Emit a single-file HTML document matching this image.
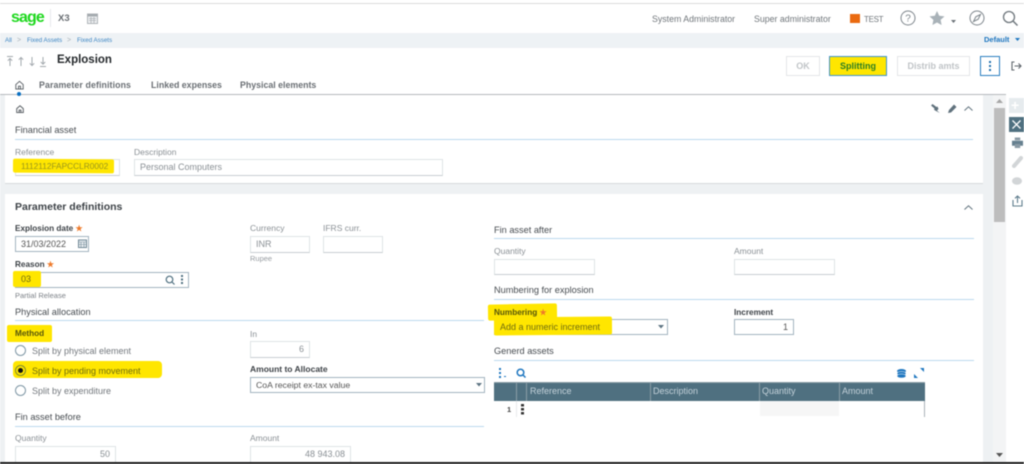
<!DOCTYPE html>
<html><head><meta charset="utf-8">
<style>
html,body{margin:0;padding:0;width:1024px;height:464px;overflow:hidden;background:#fff}
body{font-family:"Liberation Sans",sans-serif;color:#4a4f54;position:relative}
#w{position:absolute;left:0;top:0;width:1024px;height:464px;overflow:hidden;filter:blur(.4px)}
.a,.t,.i,.hl,svg{position:absolute}
.t{white-space:nowrap;font-size:9px;line-height:11px}
.i{box-sizing:border-box;background:#fff;border:1px solid #dfe3e6;border-bottom:1.5px solid #c8ced2;font-size:9px;color:#8a9095;line-height:15px;padding:0 5px;white-space:nowrap}
.e{border:1px solid #a3b4bf;color:#555}
.lab{color:#8b9196;font-size:8.5px}
.b{color:#3d4247;font-weight:bold;font-size:8.2px}
.sec{color:#474c51;font-size:9.2px}
.ln{position:absolute;height:1px;background:#bcd9ee}
.hl{background:#ffe600;border-radius:2px}
.r{text-align:right}
.th{color:#c3d1d9;font-size:9px;top:386px}
.tab{color:#6a6f74;font-weight:bold;font-size:8.8px;top:80px}
.btn{position:absolute;box-sizing:border-box;border:1px solid #e4e6e8;height:20px;top:56px;text-align:center;font-size:9px;font-weight:bold;color:#c0c4c7;line-height:18px;background:#fff}
</style></head><body><div id="w">
<div class="a" style="left:0;top:0;width:1024px;height:4px;background:#fff;border-bottom:1px solid #dcdcdc;box-sizing:border-box"></div>
<div class="t" style="left:11px;top:7px;font-size:16px;line-height:22px;font-weight:bold;color:#1ed81e;letter-spacing:-.9px">sage</div>
<div class="a" style="left:50px;top:9px;width:1px;height:18px;background:#e8eaec"></div>
<div class="t" style="left:58px;top:13px;font-size:9.5px;font-weight:bold;color:#686d72">X3</div>
<svg style="left:87px;top:13px" width="11" height="11" viewBox="0 0 11 11"><rect x=".5" y="1" width="10" height="9.5" fill="#eef0f2" stroke="#b0b5b9"/><rect x=".5" y="1" width="10" height="2.5" fill="#a5abaf"/><path d="M2 5.5h7M2 7.5h7M4 4v6M7 4v6" stroke="#b0b5b9" stroke-width=".8"/></svg>
<div class="t" style="left:652px;top:14px;color:#70767b;font-size:8.8px">System Administrator</div>
<div class="t" style="left:754px;top:14px;color:#70767b;font-size:8.8px">Super administrator</div>
<div class="a" style="left:850px;top:14px;width:10px;height:9px;background:#ea6a10"></div>
<div class="t" style="left:864px;top:14px;color:#70767b;font-size:8px;letter-spacing:-.3px">TEST</div>
<svg style="left:900px;top:10px" width="16" height="16" viewBox="0 0 16 16"><circle cx="8" cy="8" r="7" fill="none" stroke="#7e868c" stroke-width="1"/><text x="8" y="11.5" font-size="10" text-anchor="middle" fill="#7e868c" font-family="Liberation Sans">?</text></svg>
<svg style="left:929px;top:10px" width="30" height="17" viewBox="0 0 30 17"><path d="M8 1l2.2 4.8 5.3.6-3.9 3.5 1 5.1L8 12.5 3.400 15l1-5.100L.5 6.400l5.300-.6z" fill="#a9b2b8"/><path d="M22 10h5l-2.500 3z" fill="#6b7278"/></svg>
<svg style="left:969px;top:10px" width="16" height="16" viewBox="0 0 16 16"><circle cx="8" cy="8" r="7" fill="none" stroke="#7e868c"/><path d="M11.500 4.500L9.200 9.200 4.500 11.500 6.800 6.800z" fill="none" stroke="#7e868c"/></svg>
<svg style="left:1002px;top:10px" width="17" height="17" viewBox="0 0 17 17"><circle cx="7" cy="7" r="5.500" fill="none" stroke="#70787e" stroke-width="1.300"/><path d="M11 11l4.500 4.500" stroke="#70787e" stroke-width="1.500"/></svg>

<div class="a" style="left:0;top:33px;width:1024px;height:15px;background:#eef2f5"></div>
<div class="t" style="left:5px;top:36px;font-size:6.200px;line-height:9px;color:#3f87c4">All</div>
<div class="t" style="left:17px;top:36px;font-size:7px;line-height:9px;color:#aab2b8">&gt;</div>
<div class="t" style="left:27px;top:36px;font-size:6.200px;line-height:9px;color:#3f87c4">Fixed Assets</div>
<div class="t" style="left:67px;top:36px;font-size:7px;line-height:9px;color:#aab2b8">&gt;</div>
<div class="t" style="left:77px;top:36px;font-size:6.200px;line-height:9px;color:#3f87c4">Fixed Assets</div>
<div class="t" style="left:984px;top:35px;font-size:7.500px;line-height:10px;font-weight:bold;color:#1f77c0">Default</div>
<svg style="left:1015px;top:38px" width="5" height="3"><path d="M0 0h5L2.500 3z" fill="#1f77c0"/></svg>

<svg style="left:7px;top:56px" width="40" height="11" viewBox="0 0 40 11" fill="none" stroke="#a3a9ae" stroke-width="1"><path d="M0 .5h6M3 10V2.500M.8 4.700L3 2.500l2.200 2.200"/><path d="M14 10V1.500M11.800 3.700L14 1.500l2.200 2.200"/><path d="M25 1v8.500M22.800 7.300L25 9.500l2.200-2.200"/><path d="M36 1v7M33.800 6L36 8.200 38.200 6M33 10.500h6"/></svg>
<div class="t" style="left:57px;top:53px;font-size:11.500px;line-height:15px;font-weight:bold;color:#24282b">Explosion</div>

<svg style="left:15px;top:80px" width="9" height="10" viewBox="0 0 11 11" fill="none" stroke="#555b60" stroke-width="1.100"><path d="M1 5L5.500 1 10 5v5.500H1zM4.300 10.500V7h2.400v3.500"/></svg>
<div class="a" style="left:17px;top:92px;width:4px;height:4px;border-radius:50%;background:#0a6fc2;z-index:3"></div>
<div class="t tab" style="left:39px;letter-spacing:.1px">Parameter definitions</div>
<div class="t tab" style="left:151px">Linked expenses</div>
<div class="t tab" style="left:240px">Physical elements</div>

<div class="btn" style="left:786px;width:34px">OK</div>
<div class="btn" style="left:829px;width:58px;border:1px solid #3f94d1;background:#ffe600;color:#2b7d22">Splitting</div>
<div class="btn" style="left:897px;width:73px">Distrib amts</div>
<div class="a" style="left:980px;top:56px;width:20px;height:20px;box-sizing:border-box;border:1px solid #2b7fc0"></div>
<svg style="left:989px;top:61px" width="2" height="10"><path d="M0 0h2v2H0zM0 4h2v2H0zM0 8h2v2H0z" fill="#1f6fae"/></svg>
<svg style="left:1011px;top:61px" width="11" height="10" viewBox="0 0 11 10" fill="none" stroke="#5e656b" stroke-width="1.100"><path d="M3.500 1H1v8h2.500M3.500 5H10M7.500 2.500L10 5 7.500 7.500"/></svg>

<div class="a" style="left:0;top:94px;width:1006px;height:368px;background:#eef1f3;border-top:1px solid #b5b9bc;box-sizing:border-box"></div>
<div class="a" style="left:1006px;top:94px;width:18px;height:368px;background:#fff"></div>
<div class="a" style="left:5px;top:95px;width:978px;height:89px;background:#fff;border-bottom:1px solid #d6dadc;box-sizing:border-box"></div>
<div class="a" style="left:5px;top:194px;width:978px;height:268px;background:#fff"></div>

<!-- scrollbar -->
<div class="a" style="left:993px;top:95px;width:13px;height:367px;background:#f3f4f5"></div>
<div class="a" style="left:994px;top:108px;width:11px;height:114px;background:#bdbdbd"></div>
<svg style="left:996px;top:99px" width="7" height="5"><path d="M0 4h7L3.500 0z" fill="#a6a6a6"/></svg>
<svg style="left:996px;top:453px" width="7" height="5"><path d="M0 0h7L3.500 4z" fill="#555"/></svg>
<!-- sidebar -->
<div class="a" style="left:1009px;top:98px;width:15px;height:15px;background:#e6ebee"></div>
<div class="t" style="left:1011px;top:98px;font-size:14px;line-height:15px;font-weight:bold;color:#fff">+</div>
<div class="a" style="left:1009px;top:117px;width:15px;height:15px;background:#4f7080"></div>
<svg style="left:1012px;top:120px" width="9" height="9"><path d="M.5.5l8 8M8.500.5l-8 8" stroke="#fff" stroke-width="1.300"/></svg>
<svg style="left:1012px;top:137px" width="11" height="12" viewBox="0 0 12 12"><path d="M3 0h6v3H3z" fill="#8a9aa5"/><path d="M0 3.500h12V9H0z" fill="#66808f"/><path d="M3 7h6v4.500H3z" fill="#8a9aa5"/></svg>
<svg style="left:1012px;top:156px" width="11" height="12" viewBox="0 0 11 12"><path d="M2 10L9 2" stroke="#d2d5d7" stroke-width="4" stroke-linecap="round"/></svg>
<svg style="left:1012px;top:177px" width="10" height="8"><ellipse cx="5" cy="4" rx="5" ry="3.700" fill="#d2d5d7"/></svg>
<svg style="left:1012px;top:195px" width="11" height="12" viewBox="0 0 11 12" fill="none" stroke="#5f7d8d" stroke-width="1.100"><path d="M1 5v6h9V5M5.500 8V1M3 3.300L5.500 1 8 3.300"/></svg>

<!-- card 1 -->
<svg style="left:16px;top:105px" width="8" height="8" viewBox="0 0 11 11" fill="none" stroke="#555b60" stroke-width="1.300"><path d="M1 5L5.500 1 10 5v5.500H1zM4.300 10.500V7h2.400v3.500"/></svg>
<svg style="left:931px;top:104px" width="9" height="9" viewBox="0 0 9 9"><path d="M0 1.500L1.500 0l4 3 1-.5L7.500 5 6 6.500 8.800 9 5 7 3 5.800 3.500 4.500z" fill="#60727d"/></svg>
<svg style="left:948px;top:104px" width="9" height="9" viewBox="0 0 9 9"><path d="M0 9l1-3 5-5.500 2.500 2.500L3 8.500z" fill="#60727d"/></svg>
<svg style="left:964px;top:106px" width="9" height="5" fill="none" stroke="#60727d"><path d="M.5 4.500L4.500.8l4 3.700"/></svg>
<div class="t sec" style="left:15px;top:125px">Financial asset</div>
<div class="ln" style="left:15px;top:139px;width:958px"></div>
<div class="t lab" style="left:15px;top:147px">Reference</div>
<div class="t lab" style="left:134px;top:147px">Description</div>
<div class="i" style="left:15px;top:159px;width:105px;height:17px"></div>
<div class="hl" style="left:13px;top:159px;width:101px;height:14px;transform:rotate(.5deg)"></div>
<div class="t" style="left:21px;top:161px;color:#98951c;font-size:8.3px">1112112FAPCCLR0002</div>
<div class="i" style="left:134px;top:159px;width:309px;height:17px">Personal Computers</div>

<!-- card 2 -->
<div class="t" style="left:15px;top:201px;font-size:10.500px;line-height:13px;font-weight:bold;color:#3d4247">Parameter definitions</div>
<svg style="left:964px;top:205px" width="9" height="5" fill="none" stroke="#60727d"><path d="M.5 4.500L4.500.8l4 3.700"/></svg>
<div class="t b" style="left:15px;top:223px">Explosion date <span style="color:#ee7a2a">★</span></div>
<div class="i e" style="left:15px;top:236px;width:74px;height:16px;line-height:14px">31/03/2022</div>
<svg style="left:78px;top:239px" width="9" height="9" viewBox="0 0 9 9"><rect x=".5" y="1" width="8" height="7.500" fill="#eef2f5" stroke="#6f8795"/><path d="M.5 3h8M3 3v5M6 3v5M.5 5.500h8" stroke="#6f8795" stroke-width=".6"/></svg>
<div class="t lab" style="left:250px;top:223px">Currency</div>
<div class="t lab" style="left:323px;top:223px">IFRS curr.</div>
<div class="i" style="left:250px;top:236px;width:60px;height:17px">INR</div>
<div class="i" style="left:323px;top:236px;width:60px;height:17px"></div>
<div class="t" style="left:250px;top:253px;font-size:7.500px;color:#969ba0">Rupee</div>
<div class="t b" style="left:15px;top:259px">Reason <span style="color:#ee7a2a">★</span></div>
<div class="i e" style="left:15px;top:272px;width:174px;height:16px"></div>
<div class="hl" style="left:13px;top:271px;width:28px;height:16px"></div>
<div class="t" style="left:21px;top:274px;color:#6f6c10;font-size:9px">03</div>
<svg style="left:165px;top:275px" width="10" height="10" fill="none" stroke="#4f7080" stroke-width="1.200"><circle cx="4.500" cy="4.500" r="3.300"/><path d="M7 7l2.500 2.500"/></svg>
<svg style="left:181px;top:275px" width="2" height="9"><path d="M0 0h2v2H0zM0 3.500h2v2H0zM0 7h2v2H0z" fill="#4f7080"/></svg>
<div class="t" style="left:15px;top:290px;font-size:7.500px;color:#7c8187">Partial Release</div>

<div class="t sec" style="left:15px;top:307px">Physical allocation</div>
<div class="ln" style="left:15px;top:320px;width:469px"></div>
<div class="hl" style="left:7px;top:325px;width:45px;height:17px"></div>
<div class="t b" style="left:15px;top:328px;color:#56550a">Method</div>
<div class="t lab" style="left:250px;top:329px">In</div>
<div class="i r" style="left:250px;top:341px;width:60px;height:17px">6</div>
<div class="a" style="left:15px;top:345px;width:11px;height:11px;box-sizing:border-box;border:1px solid #7f97a5;border-radius:50%;background:#fff"></div>
<div class="t" style="left:32px;top:346px;color:#73787d">Split by physical element</div>
<div class="hl" style="left:13px;top:361px;width:149px;height:17px;border-radius:4px"></div>
<div class="a" style="left:15px;top:365px;width:11px;height:11px;box-sizing:border-box;border:1px solid #7f8a30;border-radius:50%"></div>
<div class="a" style="left:18px;top:368px;width:5px;height:5px;border-radius:50%;background:#111"></div>
<div class="t" style="left:32px;top:366px;color:#6f6c10">Split by pending movement</div>
<div class="a" style="left:15px;top:385px;width:11px;height:11px;box-sizing:border-box;border:1px solid #7f97a5;border-radius:50%;background:#fff"></div>
<div class="t" style="left:32px;top:386px;color:#73787d">Split by expenditure</div>
<div class="t b" style="left:250px;top:364px;font-size:8.500px">Amount to Allocate</div>
<div class="i e" style="left:250px;top:377px;width:235px;height:16px;line-height:14px;font-size:8.700px">CoA receipt ex-tax value</div>
<svg style="left:476px;top:383px" width="6" height="4"><path d="M0 0h6L3 3.500z" fill="#5e7583"/></svg>
<div class="t sec" style="left:15px;top:412px">Fin asset before</div>
<div class="ln" style="left:15px;top:426px;width:469px"></div>
<div class="t lab" style="left:15px;top:433px">Quantity</div>
<div class="t lab" style="left:250px;top:433px">Amount</div>
<div class="i r" style="left:15px;top:446px;width:101px;height:18px">50</div>
<div class="i r" style="left:250px;top:446px;width:101px;height:18px">48 943.08</div>

<div class="t sec" style="left:494px;top:225px">Fin asset after</div>
<div class="ln" style="left:494px;top:238px;width:480px"></div>
<div class="t lab" style="left:494px;top:246px">Quantity</div>
<div class="t lab" style="left:734px;top:246px">Amount</div>
<div class="i" style="left:494px;top:259px;width:101px;height:16px"></div>
<div class="i" style="left:734px;top:259px;width:101px;height:16px"></div>
<div class="t sec" style="left:494px;top:285px">Numbering for explosion</div>
<div class="ln" style="left:494px;top:299px;width:480px"></div>
<div class="i e" style="left:494px;top:319px;width:174px;height:16px"></div>
<div class="hl" style="left:488px;top:304px;width:69px;height:16px;transform:rotate(-1deg)"></div>
<div class="hl" style="left:494px;top:317px;width:118px;height:18px;transform:rotate(-.5deg)"></div>
<div class="t b" style="left:494px;top:307px;color:#56550a">Numbering <span style="color:#ee7a2a">★</span></div>
<div class="t" style="left:500px;top:322px;color:#6f6c10">Add a numeric increment</div>
<svg style="left:658px;top:325px" width="6" height="4"><path d="M0 0h6L3 3.500z" fill="#5e7583"/></svg>
<div class="t b" style="left:734px;top:307px">Increment</div>
<div class="i e r" style="left:734px;top:319px;width:60px;height:16px;line-height:14px;color:#555">1</div>
<div class="t sec" style="left:494px;top:346px">Generd assets</div>
<div class="ln" style="left:494px;top:360px;width:480px"></div>
<svg style="left:499px;top:368px" width="8" height="10"><path d="M0 0h2v2H0zM0 4h2v2H0zM0 8h2v2H0zM5 8h2v1H5z" fill="#1f77c0"/></svg>
<svg style="left:516px;top:368px" width="10" height="10" fill="none" stroke="#1f77c0" stroke-width="1.500"><circle cx="4.500" cy="4.500" r="3.300"/><path d="M7 7l2.500 2.500"/></svg>
<svg style="left:897px;top:369px" width="9" height="9"><ellipse cx="4.500" cy="2" rx="4.500" ry="2" fill="#1f77c0"/><ellipse cx="4.500" cy="4.500" rx="4.500" ry="2" fill="#1f77c0" stroke="#fff" stroke-width=".5"/><ellipse cx="4.500" cy="7" rx="4.500" ry="2" fill="#1f77c0" stroke="#fff" stroke-width=".5"/></svg>
<svg style="left:914px;top:368px" width="10" height="10" fill="#1f77c0"><path d="M6 0h4v4zM0 6v4h4z"/></svg>

<div class="a" style="left:494px;top:382px;width:431px;height:19px;background:#4f7080;border-top:1px solid #8a9ca6;box-sizing:border-box"></div>
<div class="a" style="left:516px;top:382px;width:1px;height:19px;background:#8a9ca6"></div>
<div class="a" style="left:526px;top:382px;width:1px;height:19px;background:#8a9ca6"></div>
<div class="a" style="left:650px;top:382px;width:1px;height:19px;background:#8a9ca6"></div>
<div class="a" style="left:759px;top:382px;width:1px;height:19px;background:#8a9ca6"></div>
<div class="a" style="left:839px;top:382px;width:1px;height:19px;background:#8a9ca6"></div>
<div class="t th" style="left:530px">Reference</div>
<div class="t th" style="left:653px">Description</div>
<div class="t th" style="left:762px">Quantity</div>
<div class="t th" style="left:842px">Amount</div>
<div class="t" style="left:507px;top:404px;font-size:7.500px;font-weight:bold;color:#444">1</div>
<svg style="left:521px;top:404px" width="3" height="11"><path d="M0 0h3v2.500H0zM0 4h3v2.500H0zM0 8h3v2.500H0z" fill="#333"/></svg>
<div class="a" style="left:516px;top:401px;width:1px;height:16px;background:#e8eaec"></div>
<div class="a" style="left:760px;top:401px;width:79px;height:15px;background:#f6f6f6"></div>
<div class="a" style="left:924px;top:401px;width:1px;height:16px;background:#aab2b8"></div>

<div class="a" style="left:0;top:462px;width:1024px;height:2px;background:#1a1a1a"></div>
</div></body></html>
